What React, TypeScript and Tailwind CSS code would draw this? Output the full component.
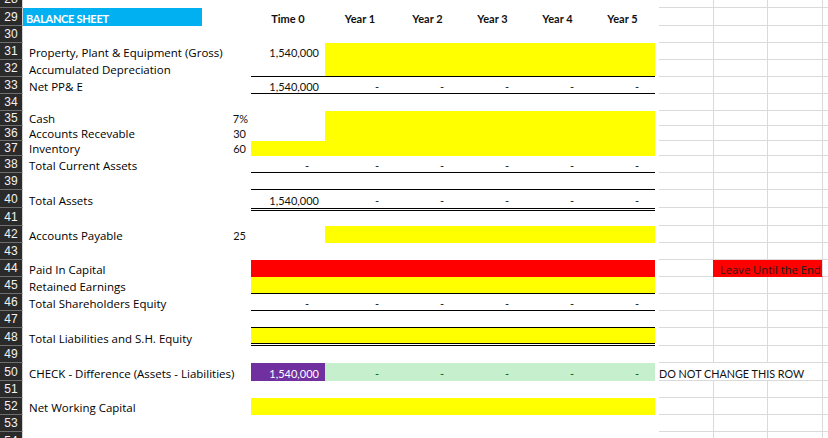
import React from "react";

type D = { f: string; t?: string; k?: string };

const lbl = "font-['Open_Sans',sans-serif] text-[11.5px] text-black";
const num = "font-['Lato',sans-serif] text-[11px] text-[#111]";

const widths = ["w-[74px]", "w-[70px]", "w-[65px]", "w-[65px]", "w-[65px]", "w-[65px]"];

// cell fills
const E = "border-b-transparent";
const EB = "border-b-black";
const Y = "bg-[#ffff00] border-b-[#ffff00]";
const YB = "bg-[#ffff00] border-b-black";
const R = "bg-[#ff0000] border-b-[#ff0000]";
const YD = "bg-[#ffff00] bg-clip-padding border-b-[3px] border-double border-b-black";
const TD = "border-t-[3px] border-double border-t-black border-b-transparent";
const P = "bg-[#7030a0] border-b-[#7030a0]";
const G = "bg-[#c6efce] border-b-[#c6efce]";

const NUM = "justify-end pr-[6px]";
const DASH = "justify-end pr-[16px]";
const HEAD = "justify-center font-bold";

const all = (f: string): D[] => widths.map(() => ({ f }));
const dashes = (f: string, first?: string): D[] =>
  widths.map((_, i) =>
    i === 0 ? { f, t: first ?? "-", k: first ? NUM : DASH } : { f, t: "-", k: DASH }
  );
const years = (t0: D, f: string): D[] => [t0, ...widths.slice(1).map(() => ({ f }))];

function Row({
  n,
  h,
  a,
  aCls = "",
  b,
  bCls = "justify-end pr-[5px]",
  d = all(E),
  g = "n",
}: {
  n: number;
  h: string;
  a?: string;
  aCls?: string;
  b?: string;
  bCls?: string;
  d?: D[];
  g?: "n" | "leave" | "check";
}) {
  return (
    <div className={`flex ${h}`}>
      <div
        className={`w-[23px] shrink-0 overflow-hidden bg-[#2a2a2a] border-r border-r-[#d4d4d4] border-b border-b-[#6e6e6e] flex justify-center ${
          n === 28 ? "items-end" : "items-start"
        }`}
      >
        <div
          className={`${
            n === 28 || n === 54 ? "h-[17px]" : "h-full"
          } shrink-0 flex items-center leading-none font-['Liberation_Sans',sans-serif] text-[12px] text-[#f2f2f2]`}
        >
          {n}
        </div>
      </div>
      <div
        className={`w-[179px] shrink-0 border-b flex items-end whitespace-nowrap leading-[13px] ${
          aCls || `${E} pl-[6px] ${lbl}`
        }`}
      >
        {a}
      </div>
      <div
        className={`w-[49px] shrink-0 border-b border-b-transparent flex items-end leading-[13px] ${num} ${bCls}`}
      >
        {b}
      </div>
      {d.map((c, i) => (
        <div
          key={i}
          className={`${widths[i]} shrink-0 border-b flex items-end leading-[13px] whitespace-nowrap ${num} ${c.f} ${
            c.k ?? ""
          }`}
        >
          {c.t}
        </div>
      ))}
      <div className="w-[4px] shrink-0" />
      {g === "n" && (
        <>
          <div className="w-[55px] shrink-0 border-r border-b border-[#dadada]" />
          <div className="w-[54px] shrink-0 border-r border-b border-[#dadada]" />
          <div className="w-[55px] shrink-0 border-r border-b border-[#dadada]" />
        </>
      )}
      {g === "leave" && (
        <>
          <div className="w-[54px] shrink-0 border-b border-[#dadada]" />
          <div className="w-[110px] shrink-0 bg-[#ff0000] border-r border-r-[#dadada] border-b border-b-[#ff0000] flex items-end pl-[7px] whitespace-nowrap leading-[13px] font-['Open_Sans',sans-serif] text-[11.2px] text-[#1c1c1c]">
            Leave Until the End
          </div>
        </>
      )}
      {g === "check" && (
        <div className="w-[164px] shrink-0 border-r border-b border-[#dadada] flex items-end whitespace-nowrap leading-[13px] font-['Lato',sans-serif] text-[10.8px] text-[#111]">
          DO NOT CHANGE THIS ROW
        </div>
      )}
      <div className="flex-1 border-b border-[#dadada]" />
    </div>
  );
}

export default function App() {
  return (
    <div className="w-[828px] h-[438px] overflow-hidden bg-white">
      <Row n={28} h="h-[8px]" />
      <Row
        n={29}
        h="h-[18px]"
        a="BALANCE SHEET"
        aCls="bg-[#00b0f0] border-b-[#00b0f0] pl-[3px] font-['Lato',sans-serif] text-[11px] font-bold tracking-[-0.3px] text-white"
        d={["Time 0", "Year 1", "Year 2", "Year 3", "Year 4", "Year 5"].map((t) => ({
          f: E,
          t,
          k: HEAD,
        }))}
      />
      <Row n={30} h="h-[17px]" />
      <Row
        n={31}
        h="h-[17px]"
        a="Property, Plant & Equipment (Gross)"
        d={years({ f: E, t: "1,540,000", k: NUM }, Y)}
      />
      <Row n={32} h="h-[17px]" a="Accumulated Depreciation" d={years({ f: EB }, YB)} />
      <Row n={33} h="h-[17px]" a="Net PP& E" d={dashes(EB, "1,540,000")} />
      <Row n={34} h="h-[17px]" />
      <Row n={35} h="h-[15px]" a="Cash" b="7%" bCls="justify-end pr-[3px]" d={years({ f: E }, Y)} />
      <Row n={36} h="h-[15px]" a="Accounts Recevable" b="30" d={years({ f: E }, Y)} />
      <Row n={37} h="h-[15px]" a="Inventory" b="60" d={all(Y)} />
      <Row n={38} h="h-[17px]" a="Total Current Assets" d={dashes(EB)} />
      <Row n={39} h="h-[17px]" d={all(EB)} />
      <Row n={40} h="h-[18px]" a="Total Assets" d={dashes(E, "1,540,000")} />
      <Row n={41} h="h-[18px]" d={all(TD)} />
      <Row n={42} h="h-[17px]" a="Accounts Payable" b="25" d={years({ f: E }, Y)} />
      <Row n={43} h="h-[17px]" />
      <Row n={44} h="h-[17px]" a="Paid In Capital" d={all(R)} g="leave" />
      <Row n={45} h="h-[17px]" a="Retained Earnings" d={all(YB)} />
      <Row n={46} h="h-[17px]" a="Total Shareholders Equity" d={dashes(EB)} />
      <Row n={47} h="h-[17px]" d={all(EB)} />
      <Row n={48} h="h-[18px]" a="Total Liabilities and S.H. Equity" d={all(YD)} />
      <Row n={49} h="h-[17px]" />
      <Row
        n={50}
        h="h-[18px]"
        a="CHECK - Difference (Assets - Liabilities)"
        d={[
          { f: `${P} text-white`, t: "1,540,000", k: NUM },
          ...widths.slice(1).map(() => ({ f: G, t: "-", k: `${DASH} text-[#006100]` })),
        ]}
        g="check"
      />
      <Row n={51} h="h-[17px]" />
      <Row n={52} h="h-[17px]" a="Net Working Capital" d={all(Y)} />
      <Row n={53} h="h-[17px]" />
      <Row n={54} h="h-[17px]" />
    </div>
  );
}
